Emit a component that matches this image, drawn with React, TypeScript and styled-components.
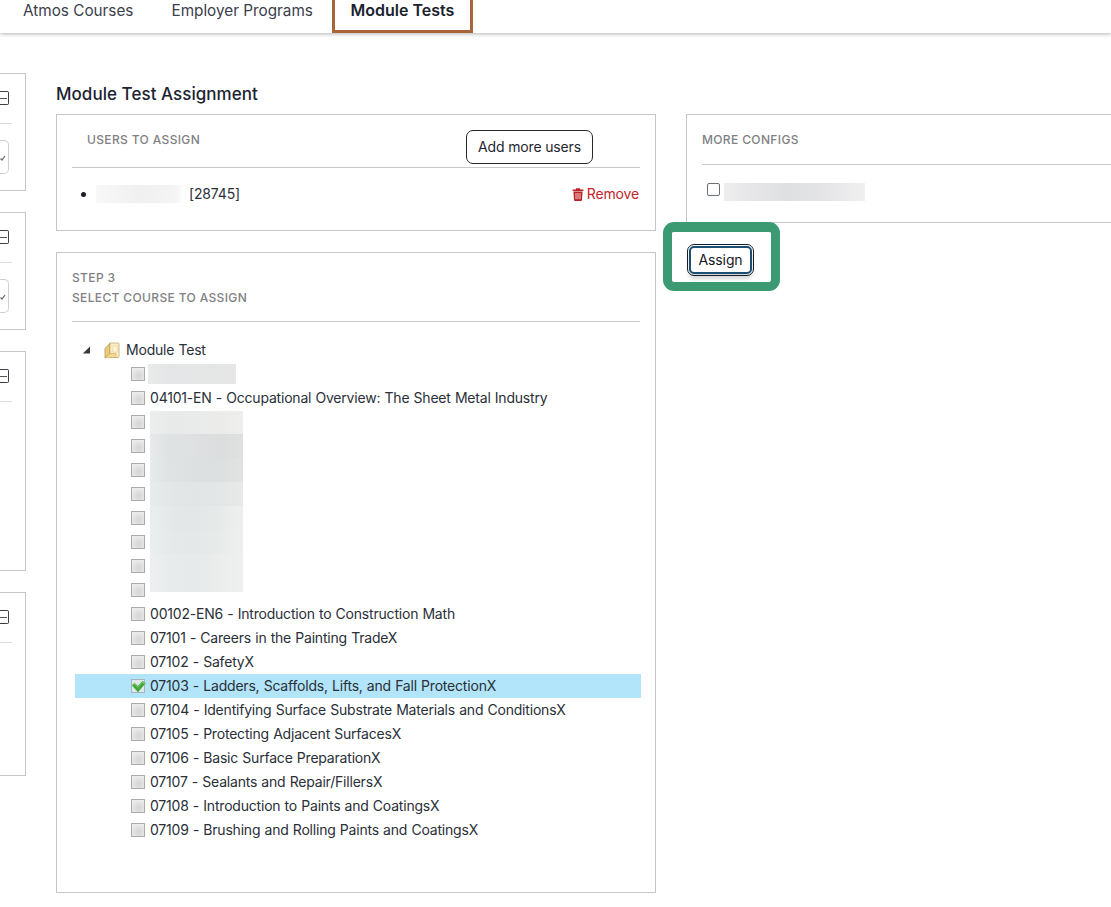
import React from "react";
import styled, { createGlobalStyle } from "styled-components";

const GlobalStyle = createGlobalStyle`
  html, body {
    margin: 0;
    padding: 0;
    background: #fff;
  }
  body {
    font-family: Inter, "Liberation Sans", sans-serif;
    color: #1f2430;
    letter-spacing: -0.15px;
  }
`;

const Page = styled.div`
  position: relative;
  width: 1111px;
  height: 907px;
  overflow: hidden;
  background: #fff;
`;

const TopBar = styled.div`
  display: flex;
  align-items: stretch;
  height: 33px;
  padding-left: 23px;
  box-shadow: 0 1px 4px rgba(0, 0, 0, 0.3);
`;

const Tab = styled.div<{ $active?: boolean }>`
  box-sizing: border-box;
  display: flex;
  align-items: center;
  height: 33px;
  font-size: ${(p) => (p.$active ? "16px" : "15.3px")};
  letter-spacing: 0;
  padding-bottom: 13px;
  color: ${(p) => (p.$active ? "#1a2230" : "#3a404b")};
  font-weight: ${(p) => (p.$active ? 600 : 400)};
  ${(p) =>
    p.$active
      ? `
    width: 141px;
    justify-content: center;
    padding-bottom: 10px;
    border: 3px solid #a9653a;
    border-top: none;
  `
      : "margin-right: 19px;"}
`;

const FirstTab = styled(Tab)`
  margin-right: 38px;
`;

const Main = styled.div`
  display: flex;
  align-items: flex-start;
  padding-top: 40px;
`;

const Sidebar = styled.div`
  flex: none;
  width: 26px;
  margin-right: 30px;
  display: flex;
  flex-direction: column;
  gap: 21px;
`;

const SideCard = styled.div<{ $height: number }>`
  box-sizing: border-box;
  height: ${(p) => p.$height}px;
  border: 1px solid #c6c6c6;
  border-left: none;
  display: flex;
  flex-direction: column;
  align-items: flex-end;
  padding: 17px 16px 0 0;
`;

const SideMinus = styled.div`
  box-sizing: border-box;
  width: 9px;
  height: 14px;
  border: 1px solid #3c4048;
  border-left: none;
  border-radius: 0 2px 2px 0;
  display: flex;
  align-items: center;
  &::after {
    content: "";
    display: block;
    width: 7px;
    height: 1px;
    background: #555;
  }
`;

const SideRule = styled.div`
  align-self: stretch;
  margin: 18px -3px 0 0;
  height: 1px;
  background: #dcdcdc;
`;

const SideSelect = styled.div`
  box-sizing: border-box;
  width: 9px;
  height: 34px;
  margin-top: 16px;
  border: 1px solid #cfcfcf;
  border-left: none;
  border-radius: 0 5px 5px 0;
  display: flex;
  align-items: center;
  color: #555;
`;

const Content = styled.div`
  flex: none;
  width: 600px;
`;

const Title = styled.h2`
  margin: 11px 0 10px;
  height: 20px;
  line-height: 20px;
  font-size: 17px;
  font-weight: 500;
  letter-spacing: 0.04px;
  color: #1b2331;
`;

const Card = styled.section<{ $height: number }>`
  box-sizing: border-box;
  height: ${(p) => p.$height}px;
  border: 1px solid #c6c6c6;
  padding: 0 15px;
`;

const UserHead = styled.div`
  box-sizing: border-box;
  display: flex;
  justify-content: space-between;
  height: 53px;
  border-bottom: 1px solid #c9c9c9;
  padding: 15px 47px 0 15px;
`;

const SectionLabel = styled.div`
  font-size: 12px;
  line-height: 20px;
  font-weight: 500;
  letter-spacing: 0.36px;
  color: #7f8184;
`;

const OutlineButton = styled.button`
  box-sizing: border-box;
  width: 127px;
  height: 34px;
  padding: 0 0 2px;
  border: 1px solid #23272e;
  border-radius: 7px;
  background: #fff;
  font: 400 14px Inter, "Liberation Sans", sans-serif;
  letter-spacing: -0.15px;
  color: #1f2430;
`;

const UserRow = styled.div`
  display: flex;
  align-items: center;
  height: 20px;
  margin-top: 16px;
  font-size: 14px;
  color: #2c313a;
`;

const Bullet = styled.span`
  width: 5px;
  height: 5px;
  margin: 0 10px 0 9px;
  border-radius: 50%;
  background: #1b1f27;
`;

const Blur = styled.span<{ $w: number; $h: number; $bg: string; $align?: string; $shift?: number }>`
  flex: none;
  display: block;
  width: ${(p) => p.$w}px;
  height: ${(p) => p.$h}px;
  margin-left: ${(p) => p.$shift ?? 0}px;
  align-self: ${(p) => p.$align ?? "center"};
  background: ${(p) => p.$bg};
`;

const UserId = styled.span`
  margin: 0 0 2px 5px;
  flex: 1;
`;

const RemoveLink = styled.span`
  display: flex;
  align-items: center;
  gap: 3px;
  margin-right: 1px;
  color: #c4242b;
`;

const RemoveText = styled.span`
  margin-bottom: 2px;
`;

const StepHead = styled.div`
  height: 69px;
  padding-top: 15px;
  box-sizing: border-box;
  border-bottom: 1px solid #c9c9c9;
  margin-bottom: 16px;
`;

const Gap = styled.div`
  height: 21px;
`;

const Tree = styled.div`
  font-size: 14px;
  letter-spacing: -0.2px;
  word-spacing: 0.45px;
  color: #2a2f38;
`;

const RootRow = styled.div`
  display: flex;
  align-items: center;
  height: 24px;
  padding-left: 10px;
  margin-top: 4px;
  gap: 13px;
`;

const RootLabel = styled.span`
  margin: 0 0 2px -7px;
`;

const Row = styled.div<{ $selected?: boolean }>`
  display: flex;
  align-items: center;
  height: 24px;
  margin: 0 0 0 3px;
  width: 566px;
  padding-left: 56px;
  box-sizing: border-box;
  background: ${(p) => (p.$selected ? "#b2e5f9" : "transparent")};
`;

const RowLabel = styled.span`
  margin-bottom: 2px;
`;

const TreeCheck = styled.span`
  box-sizing: border-box;
  flex: none;
  width: 14px;
  height: 14px;
  margin-right: 5px;
  border: 1px solid #ababab;
  background: radial-gradient(circle at 55% 65%, #d4d4d4 0%, #e2e2e2 45%, #f2f2f2 100%);
`;

const CheckedIcon = styled.svg`
  flex: none;
  margin-right: 4px;
`;

const SideColumn = styled.div`
  flex: none;
  width: 600px;
  margin: 41px 0 0 30px;
`;

const ConfigCard = styled.section`
  box-sizing: border-box;
  height: 109px;
  border: 1px solid #c6c6c6;
  padding: 0 15px;
`;

const ConfigHead = styled.div`
  height: 50px;
  padding-top: 15px;
  box-sizing: border-box;
  border-bottom: 1px solid #c9c9c9;
`;

const ConfigRow = styled.div`
  display: flex;
  align-items: flex-start;
  padding: 18px 0 0 5px;
  gap: 4px;
`;

const NativeCheck = styled.span`
  box-sizing: border-box;
  width: 13px;
  height: 13px;
  border: 1px solid #6b6f76;
  border-radius: 2px;
  background: #fff;
`;

const AssignButton = styled.button`
  display: block;
  box-sizing: border-box;
  width: 63px;
  height: 28px;
  margin: 23px 0 0 3px;
  padding: 0 0 1px;
  border: 2px solid #1d4f72;
  border-radius: 5px;
  background: #fff;
  outline: 1px solid #11202c;
  outline-offset: 1px;
  box-shadow: 0 5px 4px rgba(0, 0, 0, 0.16);
  font: 400 14px Inter, "Liberation Sans", sans-serif;
  letter-spacing: -0.1px;
  color: #14181f;
`;

const Callout = styled.div`
  position: absolute;
  left: 663px;
  top: 222px;
  width: 117px;
  height: 69px;
  box-sizing: border-box;
  border-style: solid;
  border-color: #3c9a72;
  border-width: 10px 9px 9px;
  border-radius: 11px;
  pointer-events: none;
`;

// one horizontal run of the pixelated name mask
const cells = (...colors: string[]) => `linear-gradient(90deg, ${colors.join(", ")})`;

const courses: Array<{
  label?: string;
  selected?: boolean;
  width?: number;
  height?: number;
  shift?: number;
  align?: string;
  bg?: string;
}> = [
  { width: 88, height: 20, shift: -2, bg: cells("#e9eaea", "#e4e5e6", "#e6e7e7", "#e4e5e5", "#e7e7e8") },
  { label: "04101-EN - Occupational Overview: The Sheet Metal Industry" },
  { width: 93, height: 23, align: "flex-end", bg: cells("#eceeee", "#e8eaea", "#e9ebea", "#ebecea", "#eeeeec") },
  { width: 93, height: 24, bg: cells("#e8eaeb", "#dfe2e3", "#dfe1e2", "#dcdedf", "#dcdddd", "#e0e0e0") },
  { width: 93, height: 24, bg: cells("#e8ebec", "#dfe3e4", "#dee1e2", "#dcdfe0", "#dddfdf", "#e2e2e2") },
  { width: 93, height: 24, bg: cells("#e9eced", "#e2e6e7", "#e1e5e5", "#e3e6e6", "#e8e9e9") },
  { width: 93, height: 24, bg: cells("#ebeeee", "#e5e8e9", "#e4e7e7", "#e8eaea", "#eeeeee") },
  { width: 93, height: 24, bg: cells("#ebeeee", "#e6e9ea", "#e5e8e8", "#e9ebeb", "#eeeeee") },
  { width: 93, height: 24, bg: cells("#eceeef", "#e8ebeb", "#e7eaea", "#ebecec", "#efefef") },
  { width: 93, height: 14, align: "flex-start", bg: cells("#eceeef", "#e8ebeb", "#e7eaea", "#ebecec", "#efefef") },
  { label: "00102-EN6 - Introduction to Construction Math" },
  { label: "07101 - Careers in the Painting TradeX" },
  { label: "07102 - SafetyX" },
  { label: "07103 - Ladders, Scaffolds, Lifts, and Fall ProtectionX", selected: true },
  { label: "07104 - Identifying Surface Substrate Materials and ConditionsX" },
  { label: "07105 - Protecting Adjacent SurfacesX" },
  { label: "07106 - Basic Surface PreparationX" },
  { label: "07107 - Sealants and Repair/FillersX" },
  { label: "07108 - Introduction to Paints and CoatingsX" },
  { label: "07109 - Brushing and Rolling Paints and CoatingsX" },
];

const TrashIcon = () => (
  <svg width="12" height="13" viewBox="0 0 12 13" fill="#bb2228">
    <path d="M4.2 0.3h3.6l0.6 1.2h3v1.4H0.6V1.5h3z" />
    <path d="M1.4 3.6h9.2l-0.6 8.4a1 1 0 0 1-1 1H3a1 1 0 0 1-1-1z" />
    <path d="M4 5v6.2M6 5v6.2M8 5v6.2" stroke="#fff" strokeWidth="0.8" />
  </svg>
);

const FolderIcon = () => (
  <svg width="16" height="17" viewBox="0 0 16 17">
    <path d="M5.5 1h8.5a1 1 0 0 1 1 1v12.5a1 1 0 0 1-1 1H5.5z" fill="#fbeec4" stroke="#c8b27a" strokeWidth="0.9" />
    <path d="M1 6.5 5.8 1.5v10L1 16z" fill="#eecb7c" stroke="#b8954f" strokeWidth="0.8" />
    <path d="M1.2 15.8 6 11.5h6V15.5z" fill="#f3d88f" stroke="#c8a65e" strokeWidth="0.6" />
    <path d="M9 4h4v6H9z" fill="#fff7df" stroke="#d8c48e" strokeWidth="0.5" />
  </svg>
);

const Arrow = () => (
  <svg width="9" height="8" viewBox="0 0 9 8">
    <path d="M8 0.5V7.5H0.8z" fill="#3a3a3a" />
  </svg>
);

const GreenCheck = () => (
  <CheckedIcon width="15" height="15" viewBox="0 0 15 15">
    <rect x="0.5" y="0.5" width="13" height="13" fill="#dfe9ea" stroke="#a9b5b8" />
    <path d="M0.8 6.2 3.6 4l3.2 3L11.6 2l3 2.2-7.6 9z" fill="#3fa53c" />
    <path d="M3.6 4l3.2 3L11.6 2l3 2.2-1 1.1-2.2-1-4.6 4.6L3.4 5.5 1.7 6.9l-.9-.7z" fill="#6cc25e" />
  </CheckedIcon>
);

const SideBlock = ({ height, select }: { height: number; select?: boolean }) => (
  <SideCard $height={height}>
    <SideMinus />
    <SideRule />
    {select && (
      <SideSelect>
        <svg width="7" height="7" viewBox="0 0 7 7">
          <path d="M0.5 4.5 2 6l3-4" fill="none" stroke="#666" strokeWidth="1.2" />
        </svg>
      </SideSelect>
    )}
  </SideCard>
);

const App: React.FunctionComponent = () => {
  return (
    <Page>
      <GlobalStyle />
      <TopBar>
        <FirstTab>Atmos Courses</FirstTab>
        <Tab>Employer Programs</Tab>
        <Tab $active>Module Tests</Tab>
      </TopBar>
      <Main>
        <Sidebar>
          <SideBlock height={118} select />
          <SideBlock height={118} select />
          <SideBlock height={220} />
          <SideBlock height={184} />
        </Sidebar>
        <Content>
          <Title>Module Test Assignment</Title>
          <Card $height={117}>
            <UserHead>
              <SectionLabel>USERS TO ASSIGN</SectionLabel>
              <OutlineButton>Add more users</OutlineButton>
            </UserHead>
            <UserRow>
              <Bullet />
              <Blur $w={88} $h={18} $bg="linear-gradient(90deg,#f8f8f8,#f0f0f0 50%,#f4f4f4 90%,#fff)" />
              <UserId>[28745]</UserId>
              <RemoveLink>
                <TrashIcon />
                <RemoveText>Remove</RemoveText>
              </RemoveLink>
            </UserRow>
          </Card>
          <Gap />
          <Card $height={641}>
            <StepHead>
              <SectionLabel>STEP 3</SectionLabel>
              <SectionLabel>SELECT COURSE TO ASSIGN</SectionLabel>
            </StepHead>
            <Tree>
              <RootRow>
                <Arrow />
                <FolderIcon />
                <RootLabel>Module Test</RootLabel>
              </RootRow>
              {courses.map((course, index) => (
                <Row key={index} $selected={course.selected}>
                  {course.selected ? <GreenCheck /> : <TreeCheck />}
                  {course.label ? (
                    <RowLabel>{course.label}</RowLabel>
                  ) : (
                    <Blur
                      $w={course.width ?? 0}
                      $h={course.height ?? 0}
                      $bg={course.bg ?? "none"}
                      $shift={course.shift}
                      $align={course.align}
                    />
                  )}
                </Row>
              ))}
            </Tree>
          </Card>
        </Content>
        <SideColumn>
          <ConfigCard>
            <ConfigHead>
              <SectionLabel>MORE CONFIGS</SectionLabel>
            </ConfigHead>
            <ConfigRow>
              <NativeCheck />
              <Blur $w={141} $h={18} $bg="linear-gradient(90deg,#eeeeef,#e6e6e8 20%,#dfe0e2 45%,#e4e4e6 70%,#f0f0f1)" />
            </ConfigRow>
          </ConfigCard>
          <AssignButton>Assign</AssignButton>
        </SideColumn>
      </Main>
      <Callout />
    </Page>
  );
};

export default App;
